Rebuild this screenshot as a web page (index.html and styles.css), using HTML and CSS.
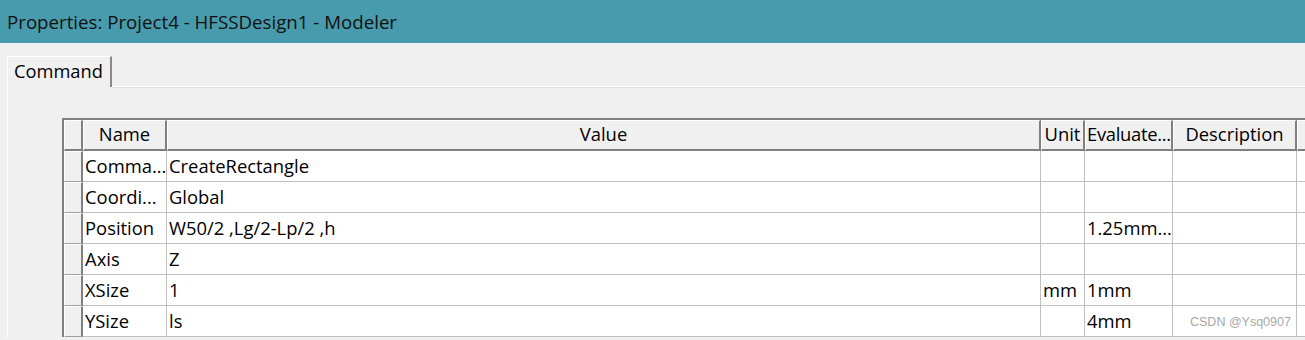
FILE: index.html
```
<!DOCTYPE html>
<html lang="en">

<head>
    <meta charset="UTF-8">
    <title>Properties: Project4 - HFSSDesign1 - Modeler</title>
    <link rel="stylesheet" href="styles.css">
</head>

<body>
    <div class="titlebar">Properties: Project4 - HFSSDesign1 - Modeler</div>

    <div class="tabstrip">
        <div class="tab">Command</div>
        <div class="tab-fill"></div>
    </div>

    <div class="panel">
        <div class="grid">
            <div class="hcell corner"></div>
            <div class="hcell">Name</div>
            <div class="hcell">Value</div>
            <div class="hcell">Unit</div>
            <div class="hcell left">Evaluate...</div>
            <div class="hcell">Description</div>
            <div class="hcell"></div>

            <div class="rowhead"></div>
            <div class="cell">Comma...</div>
            <div class="cell">CreateRectangle</div>
            <div class="cell"></div>
            <div class="cell"></div>
            <div class="cell"></div>
            <div class="cell"></div>

            <div class="rowhead"></div>
            <div class="cell">Coordi...</div>
            <div class="cell">Global</div>
            <div class="cell"></div>
            <div class="cell"></div>
            <div class="cell"></div>
            <div class="cell"></div>

            <div class="rowhead"></div>
            <div class="cell">Position</div>
            <div class="cell">W50/2 ,Lg/2-Lp/2 ,h</div>
            <div class="cell"></div>
            <div class="cell">1.25mm...</div>
            <div class="cell"></div>
            <div class="cell"></div>

            <div class="rowhead"></div>
            <div class="cell">Axis</div>
            <div class="cell">Z</div>
            <div class="cell"></div>
            <div class="cell"></div>
            <div class="cell"></div>
            <div class="cell"></div>

            <div class="rowhead"></div>
            <div class="cell">XSize</div>
            <div class="cell">1</div>
            <div class="cell">mm</div>
            <div class="cell">1mm</div>
            <div class="cell"></div>
            <div class="cell"></div>

            <div class="rowhead"></div>
            <div class="cell">YSize</div>
            <div class="cell">ls</div>
            <div class="cell"></div>
            <div class="cell">4mm</div>
            <div class="cell"></div>
            <div class="cell"></div>
        </div>
    </div>

    <div class="watermark">CSDN @Ysq0907</div>
</body>

</html>
```

FILE: styles.css
```
body {
    margin: 0;
    background: #f0f0f0;
    font-family: 'Open Sans', 'Noto Sans', sans-serif;
    color: #000;
    overflow: hidden;
    height: 340px;
    position: relative;
}

.titlebar {
    height: 43px;
    line-height: 43px;
    padding-left: 7px;
    background-color: #489bac;
    color: #111;
    font-size: 18.7px;
}

.tabstrip {
    display: flex;
    padding-top: 13px;
    padding-left: 7px;
}

.tab {
    box-sizing: border-box;
    width: 105px;
    height: 31px;
    padding-left: 6px;
    border-top: 1px solid #fff;
    border-left: 1px solid #fff;
    border-right: 2px solid #8a8a8a;
    font-size: 18.3px;
    line-height: 28px;
}

.tab-fill {
    flex: 1;
    border-bottom: 1px solid #fff;
    box-shadow: 0 1px 0 #e0e0e0;
}

.panel {
    margin-left: 7px;
    border-left: 1px solid #fff;
    padding: 31px 0 0 54px;
}

.grid {
    display: grid;
    grid-template-columns: 19px 84px 874px 44px 88px 124px 40px;
    grid-auto-rows: 31px;
    border-top: 2px solid #808080;
    border-left: 2px solid #808080;
    font-size: 18.4px;
}

.hcell,
.rowhead {
    box-sizing: border-box;
    background: #f0f0f0;
    border-top: 1px solid #fff;
    border-left: 1px solid #fff;
    border-right: 2px solid #808080;
    border-bottom: 2px solid #808080;
}

.hcell {
    text-align: center;
    line-height: 26px;
    white-space: nowrap;
    overflow: hidden;
}

.hcell.left {
    text-align: left;
    padding-left: 1px;
    letter-spacing: -0.3px;
}

.rowhead {
    border-bottom: 1px solid #a0a0a0;
}

.cell {
    box-sizing: border-box;
    background: #fff;
    border-right: 1px solid #c0c0c0;
    border-bottom: 1px solid #c0c0c0;
    padding-left: 2px;
    line-height: 29px;
    white-space: nowrap;
    overflow: hidden;
}

.watermark {
    position: absolute;
    left: 1190px;
    top: 315px;
    font-family: 'Liberation Sans', Arial, sans-serif;
    font-size: 12.5px;
    color: #a8a8a8;
}
```
